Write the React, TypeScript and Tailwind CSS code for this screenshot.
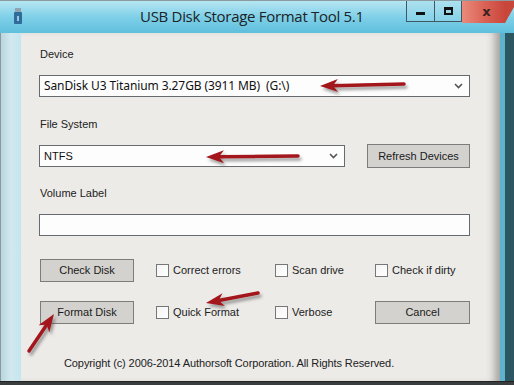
import React from 'react';

type Pt = [number, number];

// red marker arrow drawn over the dialog
function Arrow({ tail, tip }: { tail: Pt; tip: Pt }) {
  const dx = tip[0] - tail[0];
  const dy = tip[1] - tail[1];
  const len = Math.hypot(dx, dy);
  const ux = dx / len;
  const uy = dy / len;
  const headLen = 18;
  const half = 6.5;
  const bx = tip[0] - ux * headLen;
  const by = tip[1] - uy * headLen;
  const pts = [
    `${tip[0]},${tip[1]}`,
    `${bx - uy * half},${by + ux * half}`,
    `${bx + ux * 5},${by + uy * 5}`,
    `${bx + uy * half},${by - ux * half}`,
  ].join(' ');
  return (
    <g filter="url(#arrowShadow)">
      <line x1={tail[0]} y1={tail[1]} x2={bx + ux * 5} y2={by + uy * 5} stroke="#a3141c" strokeWidth={3.5} strokeLinecap="round" />
      <polygon points={pts} fill="#a3141c" />
    </g>
  );
}

function Chevron() {
  return (
    <svg width="9" height="6" viewBox="0 0 9 6" className="shrink-0">
      <path d="M1 1 L4.5 4.5 L8 1" fill="none" stroke="#555" strokeWidth="1.6" />
    </svg>
  );
}

function Check({ label }: { label: string }) {
  return (
    <label className="flex items-center gap-[4px]">
      <span className="w-[13px] h-[13px] border border-[#777] bg-gradient-to-br from-[#f4f4f4] to-white" />
      <span className="text-[11px] text-[#222]">{label}</span>
    </label>
  );
}

function Btn({ children, w }: { children: React.ReactNode; w: string }) {
  return (
    <button className={`${w} h-[23px] border border-[#7c7c7c] bg-[#d4d2ce] text-[11px] text-[#1a1a1a] flex items-center justify-center`}>
      {children}
    </button>
  );
}

export default function App() {
  return (
    <div className="w-[514px] h-[385px] bg-[#2c5661] flex flex-col relative overflow-hidden font-['Liberation_Sans',Arial,sans-serif]">
      {/* title bar */}
      <div className="h-[33px] flex bg-gradient-to-b from-[#b5e6f2] via-[#7fd0e8] to-[#5fbfdc] border-t border-[#8a9aa0]">
        <div className="w-[22px] flex justify-end pt-[7px]">
          <svg width="8" height="16" viewBox="0 0 8 16">
            <rect x="1" y="0" width="6" height="4" fill="#8fa3b0" />
            <rect x="0" y="4" width="8" height="12" rx="1" fill="#2f6c9a" />
            <rect x="3" y="8" width="2" height="5" fill="#9cc6e4" />
          </svg>
        </div>
        <div className="flex-1 pl-[118px] pt-[4px] text-[15px] text-[#1d2326] font-['Open_Sans','Noto_Sans',sans-serif] tracking-[-0.3px]">
          USB Disk Storage Format Tool 5.1
        </div>
        <div className="w-[29px] h-[21px] border-x border-b border-[#3e5864] bg-[#9fd9ea]/40 flex items-center justify-center pt-[5px]">
          <span className="w-[9px] h-[3px] bg-[#111]" />
        </div>
        <div className="w-[27px] h-[21px] border-r border-b border-[#3e5864] bg-[#9fd9ea]/40 flex items-center justify-center">
          <span className="w-[9px] h-[8px] border-2 border-t-[3px] border-[#111]" />
        </div>
        <div className="w-[43px] h-[22px] bg-gradient-to-r from-[#e98a7c] via-[#db6457] to-[#c9463b] flex items-center justify-center pl-[6px] text-[13px] font-bold text-[#3a2320] font-['DejaVu_Sans',sans-serif]">
          x
        </div>
        <div className="w-[9px]">
          <svg width="9" height="33" viewBox="0 0 9 33">
            <polygon points="0,0 9,0 9,6 0,22" fill="#c9463b" />
          </svg>
        </div>
      </div>

      <div className="flex flex-1">
        <div className="w-[21px] bg-gradient-to-r from-[#b9d6df] via-[#d3e8ee] to-[#c3e6f0] border-l border-[#8a9aa0]" />
        <div className="w-[479px] bg-[#ecebe8] shadow-[inset_-10px_0_9px_-5px_rgba(0,0,0,0.32)] flex flex-col pl-[18px] pr-[30px] pt-[14px] text-[#222]">
          <div className="text-[11px] leading-[14px] pl-[1px]">Device</div>
          <div className="mt-[14px] h-[22px] border border-[#666b70] bg-[#fdfdfd] flex items-center justify-between pl-[4px] pr-[6px]">
            <span className="text-[12px] font-['Noto_Sans',sans-serif] tracking-[-0.1px] text-[#111] whitespace-pre">SanDisk U3 Titanium 3.27GB (3911 MB)  (G:\)</span>
            <Chevron />
          </div>

          <div className="mt-[20px] text-[11px] leading-[14px] pl-[1px]">File System</div>
          <div className="mt-[13px] flex items-center">
            <div className="w-[306px] h-[22px] border border-[#666b70] bg-[#fdfdfd] flex items-center justify-between pl-[4px] pr-[6px]">
              <span className="text-[11px] text-[#111]">NTFS</span>
              <Chevron />
            </div>
            <div className="ml-[22px]">
              <Btn w="w-[103px] h-[24px]">Refresh Devices</Btn>
            </div>
          </div>

          <div className="mt-[18px] text-[11px] leading-[14px] pl-[1px]">Volume Label</div>
          <div className="mt-[14px] h-[22px] border border-[#666b70] bg-[#fdfdfd]" />

          <div className="mt-[23px] grid grid-cols-[116px_119px_100px_1fr] items-center pl-[1px]">
            <Btn w="w-[94px]">Check Disk</Btn>
            <Check label="Correct errors" />
            <Check label="Scan drive" />
            <Check label="Check if dirty" />
          </div>
          <div className="mt-[19px] grid grid-cols-[116px_119px_100px_1fr] items-center pl-[1px]">
            <Btn w="w-[94px]">Format Disk</Btn>
            <Check label="Quick Format" />
            <Check label="Verbose" />
            <Btn w="w-[95px]">Cancel</Btn>
          </div>

          <div className="mt-[31px] pl-[25px] text-[11px] text-[#222] tracking-[-0.1px]">
            Copyright (c) 2006-2014 Authorsoft Corporation. All Rights Reserved.
          </div>
        </div>
        <div className="w-[5px] bg-[#5cb3cb]" />
        <div className="w-[9px] bg-[#2c5661]" />
      </div>
      <div className="h-[4px] bg-[#3a3d3e] border-t border-[#222]" />

      {/* annotation arrows */}
      <svg className="absolute inset-0 pointer-events-none" width="514" height="385">
        <defs>
          <filter id="arrowShadow" x="-20%" y="-50%" width="140%" height="200%">
            <feDropShadow dx="2" dy="3" stdDeviation="1.6" floodColor="#555" floodOpacity="0.55" />
          </filter>
        </defs>
        <Arrow tail={[404, 84]} tip={[320, 86]} />
        <Arrow tail={[298, 156]} tip={[206, 157]} />
        <Arrow tail={[258, 293]} tip={[206, 303]} />
        <Arrow tail={[29, 351]} tip={[54, 314]} />
      </svg>
    </div>
  );
}
